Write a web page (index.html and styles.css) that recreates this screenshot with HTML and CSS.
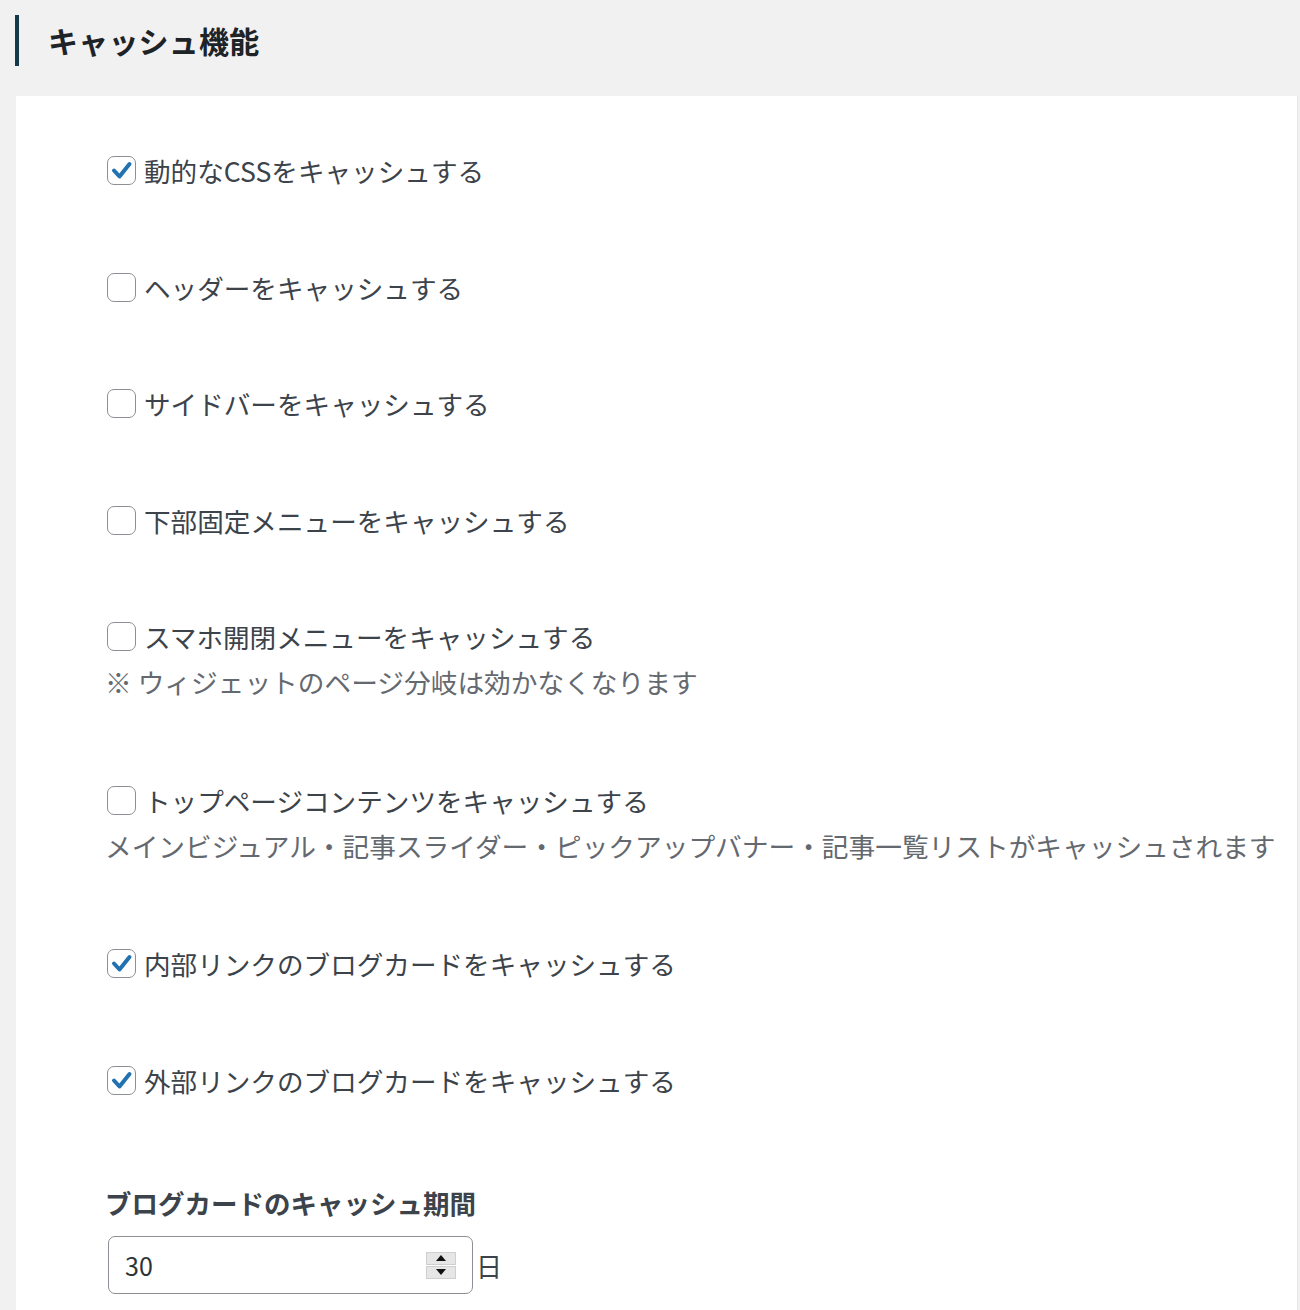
FILE: index.html
```html
<!DOCTYPE html>
<html lang="ja">
<head>
<meta charset="utf-8">
<title>キャッシュ機能</title>
<link rel="stylesheet" href="styles.css">
</head>
<body>
<div class="header">
  <h1 class="title">キャッシュ機能</h1>
</div>
<div class="panel">
  <div class="item">
    <label class="row"><span class="cb checked"><svg viewBox="0 0 29 29" width="29" height="29"><path d="M7 14.5 L12.5 20.5 L22.5 8" fill="none" stroke="#2271b1" stroke-width="4" stroke-linecap="round" stroke-linejoin="round"/></svg></span><span class="label">動的なCSSをキャッシュする</span></label>
  </div>
  <div class="item">
    <label class="row"><span class="cb"></span><span class="label">ヘッダーをキャッシュする</span></label>
  </div>
  <div class="item">
    <label class="row"><span class="cb"></span><span class="label">サイドバーをキャッシュする</span></label>
  </div>
  <div class="item">
    <label class="row"><span class="cb"></span><span class="label">下部固定メニューをキャッシュする</span></label>
  </div>
  <div class="item">
    <label class="row"><span class="cb"></span><span class="label">スマホ開閉メニューをキャッシュする</span></label>
    <p class="note">※ ウィジェットのページ分岐は効かなくなります</p>
  </div>
  <div class="item">
    <label class="row"><span class="cb"></span><span class="label">トップページコンテンツをキャッシュする</span></label>
    <p class="note">メインビジュアル・記事スライダー・ピックアップバナー・記事一覧リストがキャッシュされます</p>
  </div>
  <div class="item">
    <label class="row"><span class="cb checked"><svg viewBox="0 0 29 29" width="29" height="29"><path d="M7 14.5 L12.5 20.5 L22.5 8" fill="none" stroke="#2271b1" stroke-width="4" stroke-linecap="round" stroke-linejoin="round"/></svg></span><span class="label">内部リンクのブログカードをキャッシュする</span></label>
  </div>
  <div class="item">
    <label class="row"><span class="cb checked"><svg viewBox="0 0 29 29" width="29" height="29"><path d="M7 14.5 L12.5 20.5 L22.5 8" fill="none" stroke="#2271b1" stroke-width="4" stroke-linecap="round" stroke-linejoin="round"/></svg></span><span class="label">外部リンクのブログカードをキャッシュする</span></label>
  </div>
  <div class="field">
    <h2 class="field-title">ブログカードのキャッシュ期間</h2>
    <div class="input-row">
      <div class="num">
        <span class="num-value">30</span>
        <span class="spin"><span class="spin-btn"><svg viewBox="0 0 10 6" width="10" height="6"><path d="M5 0 L10 6 L0 6 Z" fill="#111"/></svg></span><span class="spin-btn"><svg viewBox="0 0 10 6" width="10" height="6"><path d="M0 0 L10 0 L5 6 Z" fill="#111"/></svg></span></span>
      </div>
      <span class="unit">日</span>
    </div>
  </div>
</div>
</body>
</html>
```
FILE: styles.css
```css
* { box-sizing: border-box; }
html, body {
  margin: 0;
  padding: 0;
}
body {
  background: #f1f1f1;
  font-family: "Noto Sans CJK JP", "Noto Sans", sans-serif;
  color: #3c434a;
  height: 1310px;
  overflow: hidden;
}
.header {
  padding: 15px 0 30px 15px;
}
.title {
  margin: 0;
  border-left: 4px solid #123a4a;
  padding-left: 29px;
  line-height: 51px;
  font-size: 30px;
  font-weight: 700;
  color: #1d2327;
  letter-spacing: 0.2px;
}
.panel {
  margin-left: 16px;
  margin-right: 2px;
  background: #fff;
  border-right: 1px solid #e6e6e6;
  padding: 52px 0 0 91px;
  height: 1214px;
  overflow: hidden;
}
.item {
  margin-bottom: 71.5px;
}
.row {
  display: flex;
  align-items: center;
  height: 45px;
  gap: 8px;
}
.cb {
  width: 29px;
  height: 29px;
  border: 1.5px solid #8c8f94;
  border-radius: 7px;
  background: #fff;
  display: flex;
  align-items: center;
  justify-content: center;
  flex: none;
}
.cb svg { display: block; margin: -1.5px; }
.label {
  font-size: 26.6px;
  line-height: 45px;
  color: #3c434a;
}
.note {
  margin: 0 0 0 -2px;
  padding-bottom: 2px;
  font-size: 26.7px;
  line-height: 45px;
  color: #646970;
  white-space: nowrap;
}
.field {
  padding-top: 9px;
}
.field-title {
  margin: 0 0 0 -2px;
  font-size: 26.5px;
  line-height: 40px;
  font-weight: 700;
  color: #3c434a;
}
.input-row {
  display: flex;
  align-items: center;
  margin-top: 13px;
  margin-left: 1px;
}
.num {
  width: 365px;
  height: 58px;
  border: 1.5px solid #8c8f94;
  border-radius: 7px;
  display: flex;
  align-items: center;
  padding: 0 16px 0 16px;
  justify-content: space-between;
}
.num-value {
  font-size: 25px;
  color: #2c3338;
}
.spin {
  display: flex;
  flex-direction: column;
  width: 30px;
  height: 27px;
  gap: 1px;
}
.spin-btn {
  flex: 1;
  background: #e6e6e6;
  border: 1px solid #cfcfcf;
  display: flex;
  align-items: center;
  justify-content: center;
}
.unit {
  margin-left: 3px;
  font-size: 26px;
  color: #3c434a;
}
```
